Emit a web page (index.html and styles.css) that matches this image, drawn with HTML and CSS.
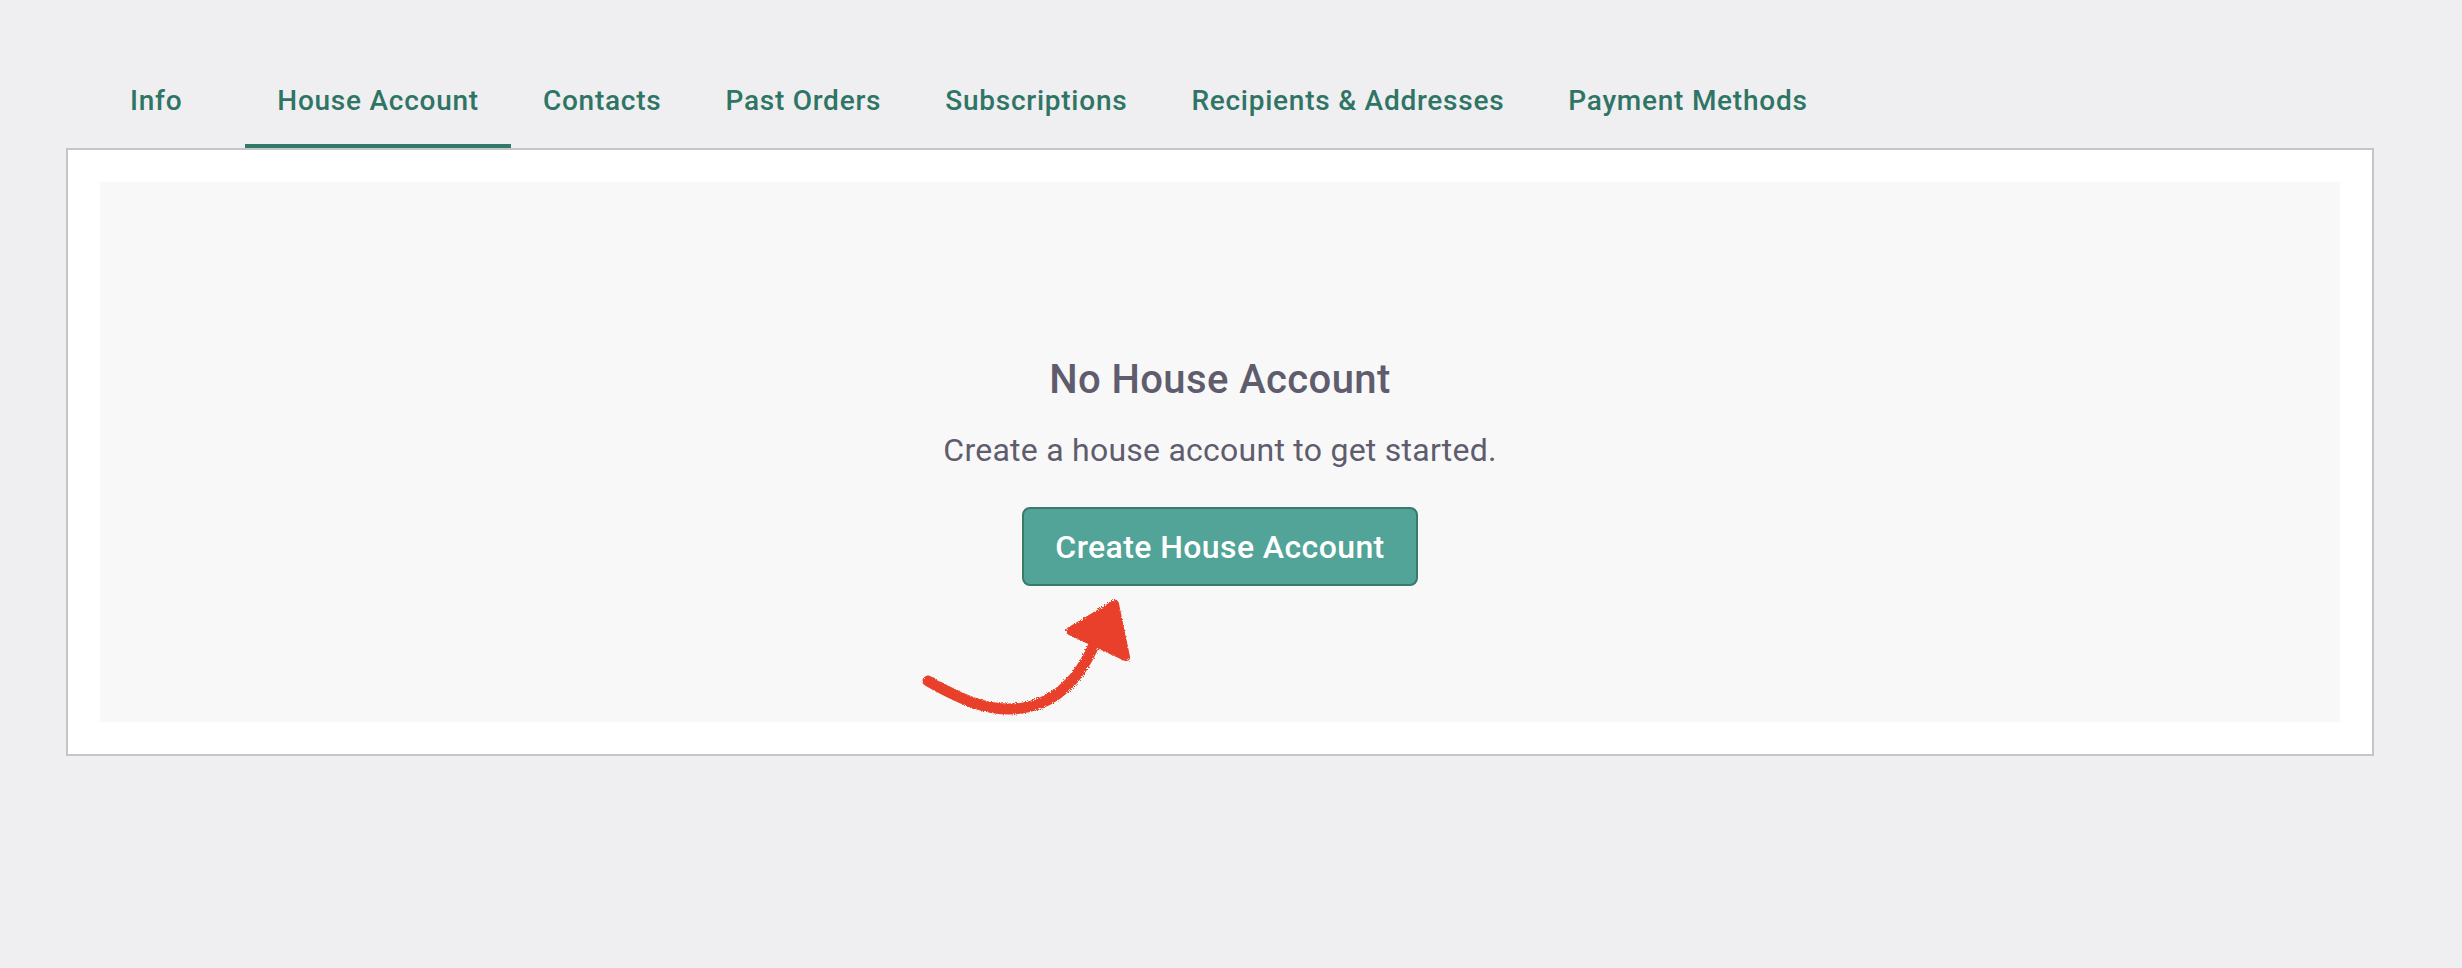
FILE: index.html
```html
<!DOCTYPE html>
<html lang="en">
<head>
<meta charset="utf-8">
<title>House Account</title>
<link rel="stylesheet" href="styles.css">
</head>
<body>
<div class="page">
  <nav class="tabs">
    <a class="tab tab-first">Info</a>
    <a class="tab active">House Account</a>
    <a class="tab">Contacts</a>
    <a class="tab">Past Orders</a>
    <a class="tab">Subscriptions</a>
    <a class="tab">Recipients &amp; Addresses</a>
    <a class="tab">Payment Methods</a>
  </nav>
  <section class="card">
    <div class="empty">
      <h2 class="empty-title">No House Account</h2>
      <p class="empty-text">Create a house account to get started.</p>
      <button class="btn-primary">Create House Account</button>
      <svg class="annot-arrow" width="215" height="125" viewBox="0 0 215 125" aria-hidden="true">
        <defs>
          <filter id="rough" x="-10%" y="-10%" width="120%" height="120%">
            <feTurbulence type="fractalNoise" baseFrequency="0.9" numOctaves="2" seed="3" result="n"/>
            <feDisplacementMap in="SourceGraphic" in2="n" scale="4"/>
          </filter>
        </defs>
        <g filter="url(#rough)" fill="none" stroke="#e8412a" stroke-linecap="round" stroke-linejoin="round">
          <path d="M8 86 C 40 104, 72 120, 108 112 C 140 105, 160 82, 174 50" stroke-width="11"/>
          <polygon points="150,36 195,9 206,62" fill="#e8412a" stroke-width="8"/>
        </g>
      </svg>
    </div>
  </section>
</div>
</body>
</html>
```
FILE: styles.css
```css
html, body {
  margin: 0;
  padding: 0;
}
body {
  background: #efeff1;
  font-family: Roboto, "Liberation Sans", Arial, sans-serif;
}
.page {
  width: 2308px;
  padding: 58px 0 0 66px;
}
.tabs {
  display: flex;
  padding-left: 32px;
}
.tab {
  display: block;
  padding: 26px 32px 27px;
  border-bottom: 4px solid transparent;
  font-size: 28px;
  font-weight: 500;
  letter-spacing: 0.75px;
  color: #2f7566;
  line-height: normal;
  cursor: pointer;
  white-space: nowrap;
}
.tab-first {
  padding-right: 63px;
}
.tab.active {
  border-bottom-color: #317a6a;
}
.card {
  background: #ffffff;
  border: 2px solid #c5c5c9;
  padding: 32px;
}
.empty {
  position: relative;
  background: #f8f8f8;
  padding: 174px 0 136px;
  display: flex;
  flex-direction: column;
  align-items: center;
}
.empty-title {
  margin: 0;
  font-size: 40px;
  font-weight: 500;
  letter-spacing: 0.4px;
  line-height: normal;
  color: #5f5c6d;
}
.empty-text {
  margin: 28px 0 0;
  font-size: 32px;
  font-weight: 400;
  letter-spacing: 0.25px;
  line-height: normal;
  color: #5f5c6d;
}
.btn-primary {
  margin-top: 38px;
  width: 396px;
  height: 79px;
  background: #52a498;
  border: 2px solid #3a7a6b;
  border-radius: 8px;
  color: #ffffff;
  font-family: Roboto, "Liberation Sans", Arial, sans-serif;
  font-size: 32px;
  font-weight: 500;
  letter-spacing: 0.4px;
  line-height: normal;
  padding: 0;
  cursor: pointer;
}
.annot-arrow {
  position: absolute;
  left: 820px;
  top: 413px;
}
```
